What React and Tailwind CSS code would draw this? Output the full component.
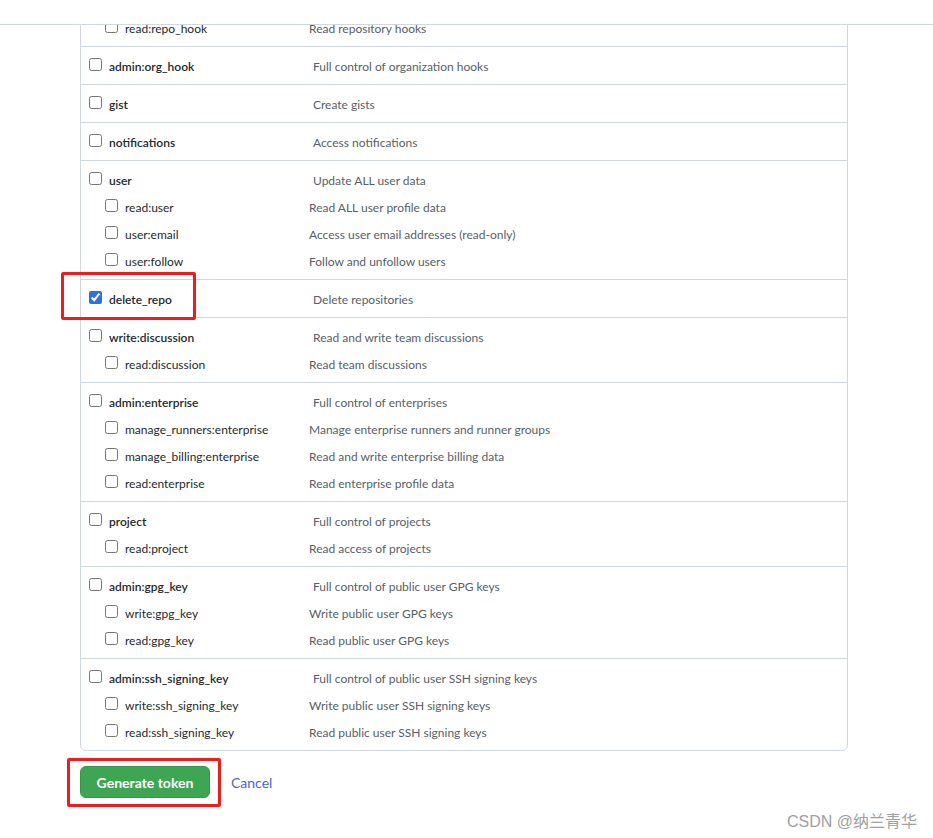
import React from "react";

const groups = [
  {
    name: "admin:repo_hook",
    desc: "Full control of repository hooks",
    subs: [
      ["write:repo_hook", "Write repository hooks"],
      ["read:repo_hook", "Read repository hooks"],
    ],
  },
  { name: "admin:org_hook", desc: "Full control of organization hooks", subs: [] },
  { name: "gist", desc: "Create gists", subs: [] },
  { name: "notifications", desc: "Access notifications", subs: [] },
  {
    name: "user",
    desc: "Update ALL user data",
    subs: [
      ["read:user", "Read ALL user profile data"],
      ["user:email", "Access user email addresses (read-only)"],
      ["user:follow", "Follow and unfollow users"],
    ],
  },
  { name: "delete_repo", desc: "Delete repositories", subs: [], checked: true },
  {
    name: "write:discussion",
    desc: "Read and write team discussions",
    subs: [["read:discussion", "Read team discussions"]],
  },
  {
    name: "admin:enterprise",
    desc: "Full control of enterprises",
    subs: [
      ["manage_runners:enterprise", "Manage enterprise runners and runner groups"],
      ["manage_billing:enterprise", "Read and write enterprise billing data"],
      ["read:enterprise", "Read enterprise profile data"],
    ],
  },
  {
    name: "project",
    desc: "Full control of projects",
    subs: [["read:project", "Read access of projects"]],
  },
  {
    name: "admin:gpg_key",
    desc: "Full control of public user GPG keys",
    subs: [
      ["write:gpg_key", "Write public user GPG keys"],
      ["read:gpg_key", "Read public user GPG keys"],
    ],
  },
  {
    name: "admin:ssh_signing_key",
    desc: "Full control of public user SSH signing keys",
    subs: [
      ["write:ssh_signing_key", "Write public user SSH signing keys"],
      ["read:ssh_signing_key", "Read public user SSH signing keys"],
    ],
  },
];

const Box = ({ checked }) => (
  <input
    type="checkbox"
    defaultChecked={checked}
    className="m-0 w-[13px] h-[13px] shrink-0 -translate-y-[2px] accent-[#2f6fe4]"
  />
);

const ScopeGroup = ({ group, first }) => (
  <div className={first ? "pt-[6px] pb-[4px]" : "border-t border-[#d0d7de] pt-[6px] pb-[4px]"}>
    <div className="flex items-center h-[27px] pl-[8px]">
      <div className="flex items-center gap-[7px] w-[224px]">
        <Box checked={group.checked} />
        <span className="font-semibold text-[#24292f]">{group.name}</span>
      </div>
      <span className="text-[#57606a]">{group.desc}</span>
    </div>
    {group.subs.map(([name, desc]) => (
      <div key={name} className="flex items-center h-[27px] pl-[24px]">
        <div className="flex items-center gap-[7px] w-[204px]">
          <Box />
          <span className="text-[#24292f]">{name}</span>
        </div>
        <span className="text-[#57606a]">{desc}</span>
      </div>
    ))}
  </div>
);

export default function App() {
  return (
    <div
      className="relative h-[838px] w-[933px] overflow-hidden bg-white flex flex-col text-[12px]"
      style={{ fontFamily: 'Lato, "Noto Sans CJK SC", sans-serif' }}
    >
      <div className="relative z-10 h-[25px] shrink-0 bg-white border-b border-[#d0d7de]" />

      <div className="pl-[80px] -mt-[71px]">
        <div className="w-[768px] border border-[#d0d7de] rounded-md">
          {groups.map((g, i) => (
            <ScopeGroup key={g.name} group={g} first={i === 0} />
          ))}
        </div>

        <div className="flex items-center gap-[21px] mt-[15px]">
          <button className="h-[32px] w-[130px] rounded-md bg-[#3ea653] border border-[#35964a] text-white font-bold text-[14px]">
            Generate token
          </button>
          <a className="text-[#4d5fd6] text-[14px]">Cancel</a>
        </div>
      </div>

      {/* annotation boxes */}
      <div className="absolute left-[61px] top-[272px] w-[135px] h-[48px] border-[3px] border-[#f01c1c] rounded-[2px]" />
      <div className="absolute left-[67px] top-[758px] w-[154px] h-[49px] border-[3px] border-[#f01c1c] rounded-[2px]" />

      <div
        className="absolute right-[16px] top-[810px] text-[16px] text-[#a0a0a0]"
        style={{ fontFamily: '"Liberation Sans", "Noto Sans CJK SC", sans-serif' }}
      >
        CSDN @纳兰青华
      </div>
    </div>
  );
}
